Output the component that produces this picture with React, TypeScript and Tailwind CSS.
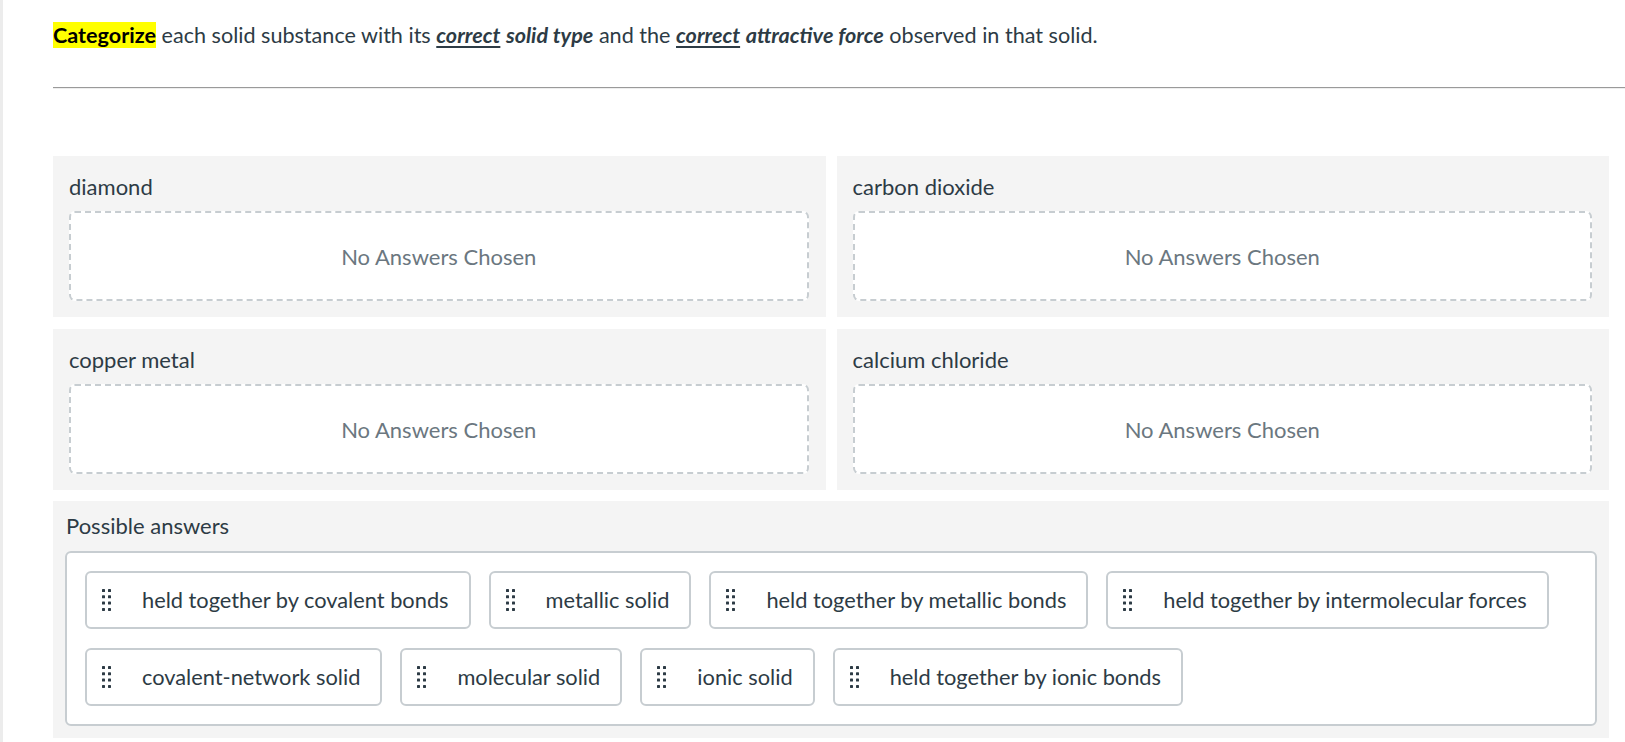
import React from 'react';

const substances = ['diamond', 'carbon dioxide', 'copper metal', 'calcium chloride'];

const answers = [
  'held together by covalent bonds',
  'metallic solid',
  'held together by metallic bonds',
  'held together by intermolecular forces',
  'covalent-network solid',
  'molecular solid',
  'ionic solid',
  'held together by ionic bonds',
];

// 2 x 4 dot grip used on each draggable answer
const DragHandle = () => (
  <svg width="9" height="22" viewBox="0 0 9 22" className="shrink-0 text-[#2d3b45]">
    {[0, 1, 2, 3].map(row =>
      [0, 1].map(col => (
        <rect key={`${row}-${col}`} x={col * 6} y={row * 6.3} width="3" height="3" rx="0.6" fill="currentColor" />
      ))
    )}
  </svg>
);

const DropZone: React.FC<{ label: string }> = ({ label }) => (
  <div className="bg-[#f4f4f4] pt-4 pb-4 pl-4 pr-[17px]">
    <div className="text-[22px] leading-[30px] mb-[9px]">{label}</div>
    <div className="h-[90px] border-2 border-dashed border-[#c7cdd1] rounded-md bg-white flex items-center justify-center">
      <span className="text-[22px] text-[#6b7780]">No Answers Chosen</span>
    </div>
  </div>
);

const App: React.FC = () => {
  return (
    <div className="min-h-screen bg-white border-l-[3px] border-[#ececec] font-['Lato','Liberation_Sans',sans-serif] text-[#2d3b45]">
      <div className="pl-[50px] pr-4 pt-[22px] pb-1">
        <p className="text-[21.6px] leading-[27px]">
          <strong className="bg-[#ffff00] text-black font-bold">Categorize</strong> each solid substance with its{' '}
          <strong className="italic underline underline-offset-[3px] decoration-2">correct</strong>{' '}
          <strong className="italic">solid type</strong> and the{' '}
          <strong className="italic underline underline-offset-[3px] decoration-2">correct</strong>{' '}
          <strong className="italic">attractive force</strong> observed in that solid.
        </p>

        <hr className="mt-[38px] -mr-4 border-t border-[#9a9a9a] border-b border-b-[#eeeeee]" />

        <div className="mt-[67px] grid grid-cols-2 gap-x-[11px] gap-y-[12px]">
          {substances.map(s => (
            <DropZone key={s} label={s} />
          ))}
        </div>

        <div className="mt-[11px] bg-[#f4f4f4] pt-3 px-3 pb-3">
          <div className="text-[22px] leading-[26px] pl-px mb-3">Possible answers</div>
          <div className="bg-white border-2 border-[#c7cdd1] rounded-md p-[18px] flex flex-wrap gap-x-[18px] gap-y-[19px]">
            {answers.map(a => (
              <div
                key={a}
                className="h-[58px] flex items-center border-2 border-[#c7cdd1] rounded-md bg-white pl-[15px] pr-[20px]"
              >
                <DragHandle />
                <span className="ml-[31px] text-[21.8px] whitespace-nowrap">{a}</span>
              </div>
            ))}
          </div>
        </div>
      </div>
    </div>
  );
};

export default App;
